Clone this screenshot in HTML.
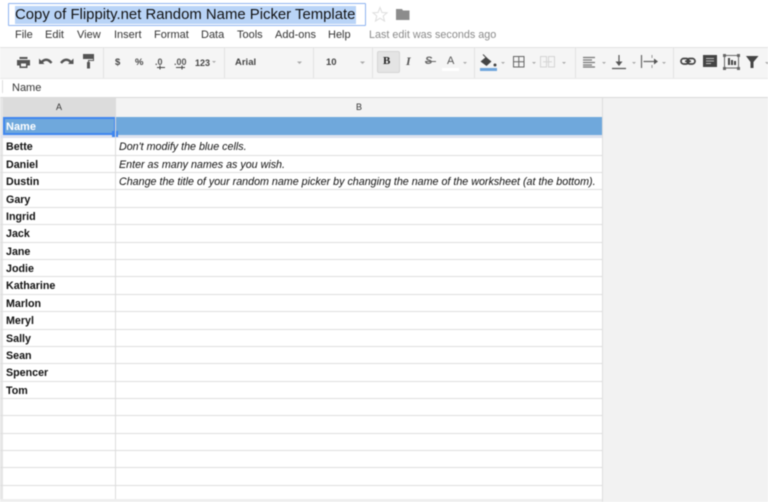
<!DOCTYPE html>
<html><head><meta charset="utf-8"><style>
html,body{margin:0;padding:0;background:#fff}
#p{position:relative;width:768px;height:502px;overflow:hidden;background:#fff;font-family:"Liberation Sans",sans-serif;filter:blur(.4px)}
#p div{position:absolute;white-space:nowrap}
.m{top:28px;font-size:11px;line-height:14px;color:#333}
.n{left:6px;font-size:10.7px;font-weight:bold;color:#111;line-height:14px}
.i{left:119px;font-size:10.71px;font-style:italic;color:#111;line-height:14px}
.h{left:0;width:603px;height:1px;background:#dedede}
.b{font-size:9.5px;font-weight:bold;line-height:12px;color:#444;top:57px}
svg{position:absolute;left:0;top:0}
</style></head><body><div id="p">
<div style="left:8px;top:3px;width:356px;height:21px;border:1px solid #8fb4f0;border-radius:1px"></div>
<div style="left:15px;top:6px;width:341px;height:18px;background:#b9d4f7"></div>
<div style="left:15px;top:6px;font-size:14.9px;line-height:18px;color:#111">Copy of Flippity.net Random Name Picker Template</div>
<div class="m" style="left:15px">File</div><div class="m" style="left:45px">Edit</div><div class="m" style="left:77px">View</div><div class="m" style="left:114px">Insert</div><div class="m" style="left:154px">Format</div><div class="m" style="left:201px">Data</div><div class="m" style="left:237px">Tools</div><div class="m" style="left:275px">Add-ons</div><div class="m" style="left:328px">Help</div>
<div class="m" style="left:369px;color:#8a8a8a;font-size:10.8px">Last edit was seconds ago</div>
<div style="left:0;top:47px;width:768px;height:31px;background:#f5f5f5;border-top:1px solid #e3e3e3"></div>
<div style="left:377px;top:51px;width:21px;height:20px;background:#e4e4e4;border:1px solid #d6d6d6;border-radius:2px"></div>
<div class="b" style="left:235px">Arial</div>
<div class="b" style="left:326px">10</div>
<div class="b" style="left:195px;font-size:9px">123</div>
<div class="b" style="left:115px">$</div>
<div class="b" style="left:135px">%</div>
<div class="b" style="left:155px;top:56px;font-size:9px;color:#555">.0</div>
<div class="b" style="left:174px;top:56px;font-size:9px;color:#555">.00</div>
<div style="left:383px;top:55px;font-size:11px;font-family:'Liberation Serif',serif;font-weight:bold;line-height:13px;color:#222">B</div>
<div style="left:406px;top:55px;font-size:12px;font-family:'Liberation Serif',serif;font-style:italic;font-weight:bold;line-height:13px;color:#555">I</div>
<div style="left:425px;top:55px;font-size:11px;font-style:italic;font-weight:bold;line-height:13px;color:#666">S</div>
<div style="left:447px;top:55px;font-size:11px;line-height:13px;color:#555">A</div>
<svg width="768" height="100" viewBox="0 0 768 100">
<g stroke="#e2e2e2"><path d="M103.500 48V78M224.500 48V78M313.500 48V78M372.500 48V78M474.500 48V78M575.500 48V78M673.500 48V78"/></g>
<path d="M380 7.500 L382 12.500 387 12.800 383.200 16 384.500 21 380 18.200 375.500 21 376.800 16 373 12.800 378 12.500Z" fill="none" stroke="#ddd"/>
<path d="M396 9h6l1 1.500h6.500V20H396Z" fill="#8c8c8c"/>
<path d="M19.500 57h8v2h-8ZM17 60h13v5.500h-2.500V68h-8v-2.500H17Z" fill="#555"/><path d="M21 63.500h5v3h-5Z" fill="#f5f5f5"/>
<path d="M41.500 62.500c2.500-3.500 6.500-4 10 .5" fill="none" stroke="#555" stroke-width="2.400"/><path d="M39 58.500v5.500h5.500Z" fill="#555"/>
<path d="M71 62.500c-2.500-3.500-6.500-4-10 .5" fill="none" stroke="#555" stroke-width="2.400"/><path d="M73.500 58.500v5.500H68Z" fill="#555"/>
<path d="M83 54h11v5H83ZM87 62h3v6.500h-3Z" fill="#555"/><path d="M93.500 57v3.500h-5V62" fill="none" stroke="#555"/>
<path d="M157 67.500h8M160 65.500v4M176 67.500h9M182 65.500v4" stroke="#444" fill="none"/>
<path d="M425 61.500h11" stroke="#666"/>
<g fill="#aaa"><path d="M212 61h4l-2 2ZM297 61.500h5l-2.500 2.500ZM360 61.500h5l-2.500 2.500ZM463 62h4l-2 2ZM501 62h4l-2 2ZM532 62h4l-2 2ZM562 62h4l-2 2ZM602 62h4l-2 2ZM632 62h4l-2 2ZM662 62h4l-2 2ZM765 62h3v2h-1Z"/></g>
<rect x="442" y="68" width="17" height="3" fill="#fff"/>
<path d="M486 57l5.500 4.500-5 4.500-6-4.500Z" fill="#444"/><path d="M483 54.500l4 4" stroke="#444"/><circle cx="495" cy="65" r="1.500" fill="#444"/>
<rect x="480" y="68" width="17" height="3" fill="#6fa5dc"/>
<path d="M513.500 56.500h10.500v10.500h-10.500ZM518.800 56.500V67M513.500 61.800h10.500" fill="none" stroke="#666"/>
<path d="M540.500 56.500h6v10.500h-6ZM548.500 56.500h6v10.500h-6Z" fill="none" stroke="#d4d4d4"/><path d="M543 61.800h9" stroke="#d4d4d4"/>
<path d="M583 57.500h12M583 60h9M583 62.500h12M583 65h9M583 67h12" stroke="#777" stroke-width="1.300" fill="none"/>
<path d="M612 68.500h14M619 55v9" stroke="#555" fill="none" stroke-width="1.200"/><path d="M615.500 61.500h7L619 66Z" fill="#555"/>
<path d="M641.500 55v13M656.500 61.500h-13" stroke="#666" fill="none" stroke-width="1.200"/><path d="M654 58.500v6l4-3Z" fill="#555"/><path d="M652 55v3M652 65v3" stroke="#999"/>
<rect x="681" y="58.500" width="8" height="5.500" rx="2.700" fill="none" stroke="#444" stroke-width="1.700"/><rect x="687" y="58.500" width="8" height="5.500" rx="2.700" fill="none" stroke="#444" stroke-width="1.700"/><path d="M685 61.200h6" stroke="#444" stroke-width="1.500"/>
<path d="M703 55h14v12h-14Z" fill="#444"/><path d="M706 58.500h8M706 61h8M706 63.500h5" stroke="#bbb"/>
<rect x="724.500" y="55.500" width="14" height="12.500" fill="none" stroke="#666"/><path d="M728 58v7h2v-7ZM731 60v5h2v-5ZM734 61v4h2v-4Z" fill="#444"/><path d="M723 54h3v3h-3ZM737 54h3v3h-3ZM723 67h3v3h-3ZM737 67h3v3h-3Z" fill="#666"/>
<path d="M746 56h12.500l-5 6v6h-3v-6Z" fill="#444"/>
</svg>
<div style="left:0;top:78px;width:768px;height:19px;background:#fff;border-top:1px solid #e8e8e8"></div>
<div style="left:2px;top:80px;width:1px;height:13px;background:#ddd"></div>
<div style="left:12px;top:81px;font-size:11px;line-height:14px;color:#333">Name</div>
<div style="left:0;top:97px;width:768px;height:405px;background:#f2f2f2;border-top:1px solid #d9d9d9;box-sizing:border-box"></div>
<div style="left:0;top:98px;width:603px;height:404px;background:#fff"></div>
<div style="left:0;top:98px;width:3px;height:404px;background:#e6e6e6"></div>
<div style="left:3px;top:98px;width:112px;height:19px;background:#dcdcdc"></div>
<div style="left:116px;top:98px;width:486px;height:19px;background:#f3f3f3"></div>
<div style="left:56px;top:101px;font-size:9px;line-height:12px;color:#333">A</div>
<div style="left:356px;top:101px;font-size:9px;line-height:12px;color:#333">B</div>
<div style="left:3px;top:117px;width:600px;height:18px;background:#6fa8dc"></div>
<div style="left:0;top:135px;width:603px;height:3px;background:#dde2ee"></div>
<div style="left:3px;top:117px;width:109px;height:14px;border:2px solid #3f86ef"></div>
<div style="left:112px;top:131px;width:6px;height:6px;background:#3f86ef"></div>
<div style="left:6px;top:120px;font-size:11px;font-weight:bold;line-height:14px;color:#fff">Name</div>
<div class="h" style="top:155px"></div><div class="h" style="top:172px"></div><div class="h" style="top:189px"></div><div class="h" style="top:207px"></div><div class="h" style="top:224px"></div><div class="h" style="top:242px"></div><div class="h" style="top:259px"></div><div class="h" style="top:276px"></div><div class="h" style="top:294px"></div><div class="h" style="top:311px"></div><div class="h" style="top:329px"></div><div class="h" style="top:346px"></div><div class="h" style="top:363px"></div><div class="h" style="top:381px"></div><div class="h" style="top:398px"></div><div class="h" style="top:415px"></div><div class="h" style="top:433px"></div><div class="h" style="top:450px"></div><div class="h" style="top:467px"></div><div class="h" style="top:485px"></div><div class="h" style="top:499px;height:3px;background:#eee"></div>
<div style="left:115px;top:98px;width:1px;height:401px;background:#dcdcdc"></div>
<div style="left:602px;top:98px;width:1px;height:404px;background:#dedede"></div>
<div class="n" style="top:140px">Bette</div><div class="n" style="top:158px">Daniel</div><div class="n" style="top:175px">Dustin</div><div class="n" style="top:193px">Gary</div><div class="n" style="top:210px">Ingrid</div><div class="n" style="top:227px">Jack</div><div class="n" style="top:245px">Jane</div><div class="n" style="top:262px">Jodie</div><div class="n" style="top:279px">Katharine</div><div class="n" style="top:297px">Marlon</div><div class="n" style="top:314px">Meryl</div><div class="n" style="top:332px">Sally</div><div class="n" style="top:349px">Sean</div><div class="n" style="top:366px">Spencer</div><div class="n" style="top:384px">Tom</div>
<div class="i" style="top:140px">Don't modify the blue cells.</div>
<div class="i" style="top:158px">Enter as many names as you wish.</div>
<div class="i" style="top:175px">Change the title of your random name picker by changing the name of the worksheet (at the bottom).</div>
</div></body></html>
